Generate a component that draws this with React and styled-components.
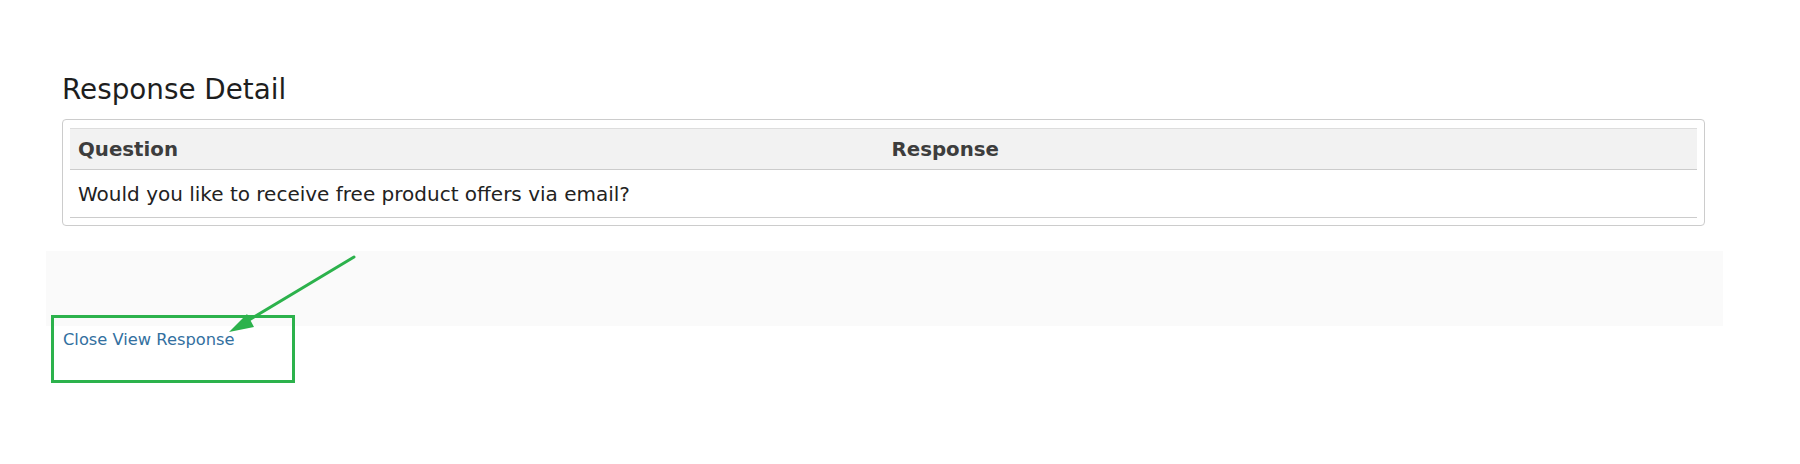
import React from 'react';
import styled, { createGlobalStyle } from 'styled-components';

const GlobalStyle = createGlobalStyle`
    html, body {
        margin: 0;
        padding: 0;
        background: #ffffff;
    }
    body {
        font-family: "DejaVu Sans", Verdana, sans-serif;
        color: #222222;
    }
`;

const Page = styled.div`
    position: relative;
    width: 1800px;
    height: 464px;
    padding-top: 74px;
    box-sizing: border-box;
`;

const Section = styled.div`
    margin-left: 46px;
    width: 1677px;
    padding: 0 18px 0 16px;
    box-sizing: border-box;
`;

const Title = styled.h3`
    margin: 0 0 13px 0;
    font-size: 27.8px;
    line-height: 32px;
    font-weight: normal;
    color: #1e1e1e;
`;

const Card = styled.div`
    border: 1px solid #cccccc;
    border-radius: 4px;
    padding: 8px 7px 7px;
`;

const Table = styled.table`
    width: 100%;
    border-collapse: collapse;
    font-size: 20px;
`;

const HeadCell = styled.th`
    width: 50%;
    height: 40px;
    padding: 0 8px;
    text-align: left;
    font-weight: bold;
    font-size: 19.8px;
    color: #3d3d3d;
    background: #f2f2f2;
    border-top: 1px solid #dddddd;
    border-bottom: 1px solid #cccccc;
`;

const Cell = styled.td`
    height: 48px;
    box-sizing: border-box;
    padding: 1px 8px 0;
    color: #222222;
    border-bottom: 1px solid #cccccc;
`;

const Band = styled.div`
    margin: 25px 0 0 46px;
    width: 1677px;
    height: 75px;
    background: #fafafa;
`;

const LinkRow = styled.div`
    margin-top: 4px;
    padding-left: 63px;
`;

const Link = styled.a`
    font-size: 16.3px;
    color: #33709f;
    text-decoration: none;
    cursor: pointer;
`;

const Highlight = styled.div`
    position: absolute;
    left: 51px;
    top: 315px;
    width: 244px;
    height: 68px;
    border: 3px solid #2cb24c;
    box-sizing: border-box;
    pointer-events: none;
`;

const Arrow = styled.svg`
    position: absolute;
    left: 0;
    top: 0;
    pointer-events: none;
`;

const App = () => {
    return (
        <Page>
            <GlobalStyle />
            <Section>
                <Title>Response Detail</Title>
                <Card>
                    <Table>
                        <thead>
                            <tr>
                                <HeadCell>Question</HeadCell>
                                <HeadCell>Response</HeadCell>
                            </tr>
                        </thead>
                        <tbody>
                            <tr>
                                <Cell>Would you like to receive free product offers via email?</Cell>
                                <Cell></Cell>
                            </tr>
                        </tbody>
                    </Table>
                </Card>
            </Section>
            <Band />
            <LinkRow>
                <Link>Close View Response</Link>
            </LinkRow>

            {/* annotation */}
            <Highlight />
            <Arrow width="400" height="400" viewBox="0 0 400 400">
                <line x1="354" y1="257" x2="244" y2="323" stroke="#2cb24c" strokeWidth="3" strokeLinecap="round" />
                <polygon points="229,332 247,314 254,327" fill="#2cb24c" />
            </Arrow>
        </Page>
    );
}

export default App;
